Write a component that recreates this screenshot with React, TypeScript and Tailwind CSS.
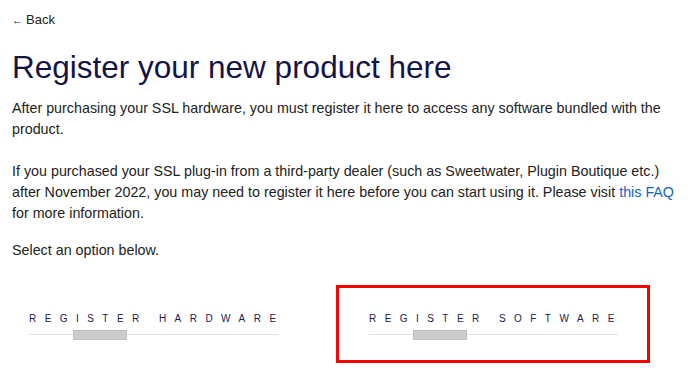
import React from "react";

const OptionButton: React.FC<{ label: string; boxed?: boolean }> = ({ label, boxed }) => {
  return (
    <div
      className={
        boxed
          ? "border-[3px] border-[#ff0000] w-[314px] h-[78px] pl-[30px] pt-[25px]"
          : "w-[249px] h-[78px] pt-[28px]"
      }
    >
      <div className="w-[249px]">
        <div className="text-[10px] leading-[12px] tracking-[8.45px] text-[#1c1c4e] whitespace-nowrap">
          {label}
        </div>
        <div className="relative mt-[5px] h-[10px]">
          <div className="absolute left-0 right-0 top-[4px] h-px bg-[#e2e2e2]" />
          <div className="absolute left-[44px] top-0 w-[54px] h-[10px] bg-[#cbcbcb] border border-[#c0c0c0]" />
        </div>
      </div>
    </div>
  );
};

const App: React.FC = () => {
  return (
    <div className="w-[694px] h-[377px] bg-white font-['Liberation_Sans',Arial,sans-serif] text-[#222] overflow-hidden">
      <div className="px-[12px] pt-[12px]">
        <a href="#" className="flex items-center gap-[3px] text-[13px] leading-[16px] text-[#222]">
          <span className="text-[11px]">←</span>
          <span>Back</span>
        </a>
        <h1 className="mt-[21px] text-[31.5px] leading-[36px] text-[#141446]">
          Register your new product here
        </h1>
        <p className="mt-[13px] text-[14.3px] leading-[21px]">
          After purchasing your SSL hardware, you must register it here to access any software bundled with the product.
        </p>
        <p className="mt-[21px] text-[14.3px] leading-[21px]">
          If you purchased your SSL plug-in from a third-party dealer (such as Sweetwater, Plugin Boutique etc.) after November 2022, you may need to register it here before you can start using it. Please visit{" "}
          <a href="#" className="text-[#1565c0]">this FAQ</a> for more information.
        </p>
        <p className="mt-[16px] text-[14.3px] leading-[21px]">Select an option below.</p>
      </div>
      <div className="flex items-start mt-[24px] pl-[29px]">
        <OptionButton label="REGISTER HARDWARE" />
        <div className="ml-[58px]">
          <OptionButton label="REGISTER SOFTWARE" boxed />
        </div>
      </div>
    </div>
  );
};

export default App;
